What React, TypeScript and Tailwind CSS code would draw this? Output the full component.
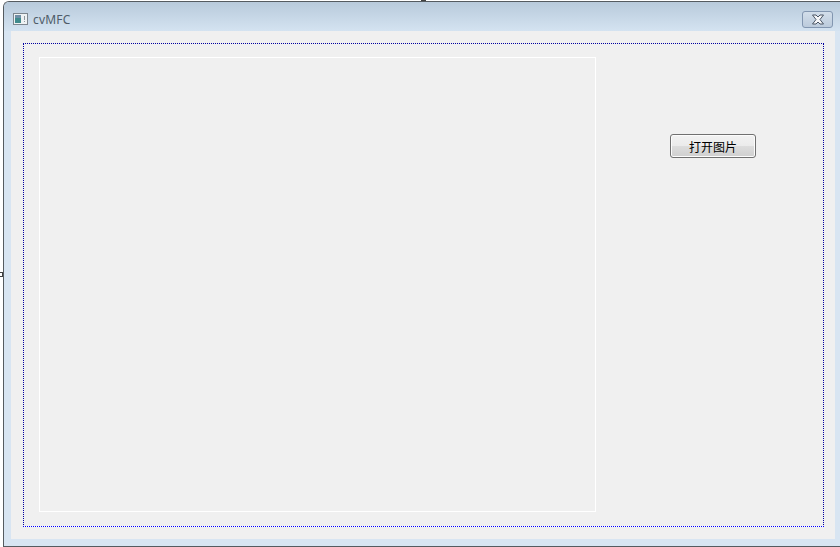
function AppIcon() {
    return (
        <svg width="15" height="12" viewBox="0 0 15 12" className="shrink-0 -mt-[2px]">
            <rect x="0.5" y="0.5" width="14" height="11" fill="#eef2f3" stroke="#7d868e" />
            <rect x="2" y="2" width="6" height="8" fill="#3f8a8c" />
            <rect x="2" y="2" width="6" height="3" fill="#6f8fa6" />
            <rect x="11" y="3" width="1" height="4" fill="#8f989f" />
            <rect x="11" y="8" width="1" height="1" fill="#8f989f" />
        </svg>
    );
}

function CloseGlyph() {
    return (
        <svg width="14" height="11" viewBox="0 0 14 11">
            <path
                d="M1.5 1 H5 L7 3 L9 1 H12.5 L9 5.5 L12.5 10 H9 L7 8 L5 10 H1.5 L5 5.5 Z"
                fill="#f6f7f9"
                stroke="#4a5564"
                strokeWidth="1"
                strokeLinejoin="round"
            />
        </svg>
    );
}

export default function App() {
    return (
        <div className="relative w-[840px] h-[547px] overflow-hidden bg-white pt-px pl-[3px] font-['Noto_Sans','Liberation_Sans',sans-serif]">
            {/* resize handles of the dialog */}
            <div className="absolute left-[421px] top-0 w-[5px] h-px bg-[#404040]" />
            <div className="absolute left-0 top-[272px] w-[3px] h-[5px] border border-l-0 border-[#404040]" />

            {/* Window frame */}
            <div className="flex flex-col h-[546px] border-l border-t border-b border-[#555b60] rounded-tl-[6px] bg-[#d8e5f2] overflow-hidden">
                {/* Title bar */}
                <div className="flex items-start h-[29px] shrink-0 bg-gradient-to-b from-[#b8cadb] to-[#d4e3f1]">
                    <div className="flex items-center gap-[5px] pl-[9px] pt-[10px]">
                        <AppIcon />
                        <span className="text-[12px] leading-[16px] tracking-[0.2px] text-[#4f5c68]">cvMFC</span>
                    </div>
                    <div className="ml-auto mr-[7px] mt-[9px] flex items-center justify-center w-[31px] h-[17px] rounded-[3px] border border-[#8296b0] bg-gradient-to-b from-[#d2deea] to-[#bccbdc]">
                        <CloseGlyph />
                    </div>
                </div>

                {/* Client area */}
                <div className="ml-[7px] mr-[5px] h-[508px] shrink-0 bg-[#f0f0f0] pl-3 pt-3 pr-[11px] pb-[12px]">
                    {/* 1px on / 1px off dotted frame, the bottom edge is the brighter blue */}
                    <div className="flex h-[484px] pl-[16px] pt-[14px] bg-no-repeat [background-image:repeating-linear-gradient(90deg,#0000a0_0_1px,transparent_1px_2px),repeating-linear-gradient(90deg,#0000ff_0_1px,#ffffff_1px_2px),repeating-linear-gradient(0deg,#0000a0_0_1px,transparent_1px_2px),repeating-linear-gradient(0deg,#0000a0_0_1px,transparent_1px_2px)] [background-size:100%_1px,100%_1px,1px_100%,1px_100%] [background-position:0_0,0_100%,0_0,100%_0]">
                        <div className="w-[557px] h-[455px] shrink-0 border border-white" />
                        <button className="ml-[74px] mt-[77px] w-[86px] h-[24px] shrink-0 pt-px rounded-[3px] border border-[#707070] bg-[linear-gradient(to_bottom,#f2f2f2_0%,#ebebeb_50%,#dddddd_50%,#cfcfcf_100%)] shadow-[inset_0_0_0_1px_#fcfcfc] text-[12px] leading-[21px] text-black font-['Noto_Sans_CJK_SC',sans-serif]">
                            打开图片
                        </button>
                    </div>
                </div>
            </div>
        </div>
    );
}
